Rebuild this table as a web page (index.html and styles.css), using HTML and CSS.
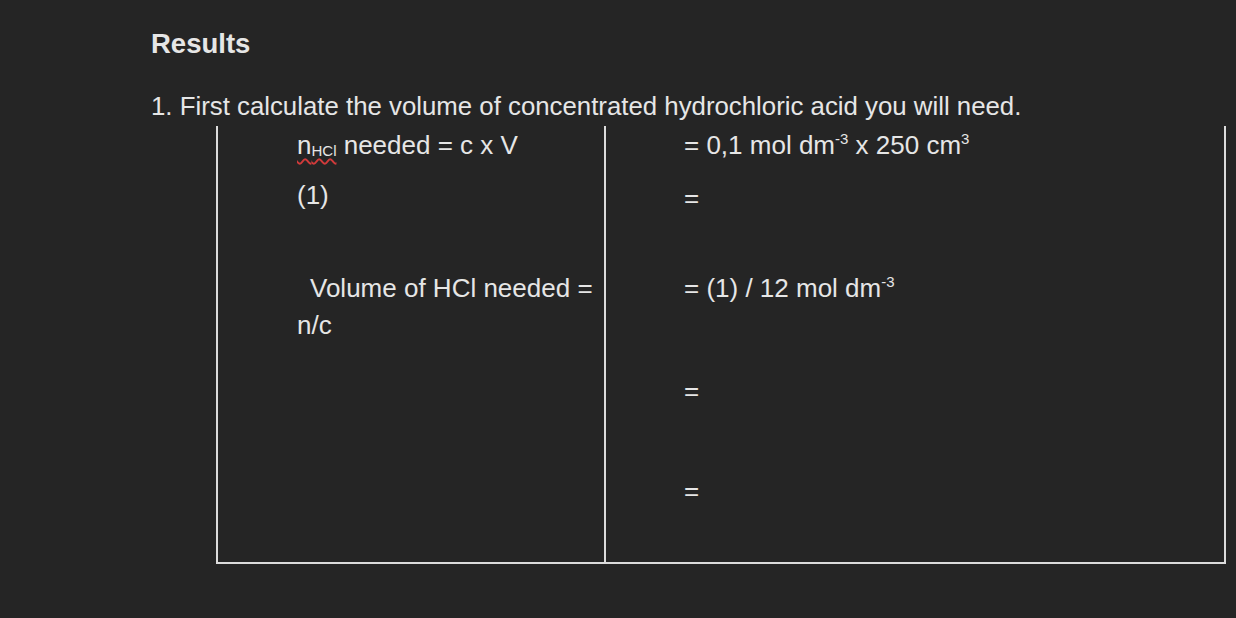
FILE: index.html
```html
<!DOCTYPE html>
<html>
<head>
<meta charset="utf-8">
<link rel="stylesheet" href="styles.css">
</head>
<body>
<main class="doc">
  <h2 class="title">Results</h2>
  <p class="question">1. First calculate the volume of concentrated hydrochloric acid you will need.</p>
  <div class="calc">
    <div class="cell cell-left">
      <p class="line"><span class="spell">n<sub>HCl</sub></span> needed = c x V</p>
      <p class="line gap-s">(1)</p>
      <p class="line gap-l wrap">Volume of HCl needed = n/c</p>
    </div>
    <div class="cell cell-right">
      <p class="line">= 0,1 mol dm<sup>-3</sup> x 250 cm<sup>3</sup></p>
      <p class="line gap-s eq">=</p>
      <p class="line gap-l">= (1) / 12 mol dm<sup>-3</sup></p>
      <p class="line gap-xl eq">=</p>
      <p class="line gap-xl2 eq">=</p>
    </div>
  </div>
</main>
</body>
</html>
```

FILE: styles.css
```css
html, body {
  margin: 0;
  padding: 0;
  background: #252525;
  width: 1236px;
  height: 618px;
  overflow: hidden;
}
.doc {
  padding: 27px 0 0 151px;
  font-family: "Liberation Sans", Arial, sans-serif;
  color: #e6e6e6;
}
.title {
  margin: 0;
  font-size: 27.5px;
  font-weight: bold;
  line-height: 34px;
}
.question {
  margin: 27px 0 0 0;
  font-size: 25.8px;
  line-height: 37px;
  white-space: nowrap;
}
.calc {
  margin-left: 65px;
  width: 1010px;
  height: 438px;
  margin-top: 1px;
  display: grid;
  grid-template-columns: 388px 1fr;
  border-left: 2px solid #dcdcdc;
  border-right: 2px solid #dcdcdc;
  border-bottom: 2px solid #dcdcdc;
  box-sizing: border-box;
}
.cell {
  display: flex;
  flex-direction: column;
}
.cell-left {
  padding: 1px 10px 0 79px;
  border-right: 2px solid #dcdcdc;
}
.cell-right {
  padding: 1px 10px 0 78px;
}
.line {
  margin: 0;
  font-size: 26px;
  line-height: 37px;
}
.eq { position: relative; top: 3px; }
.gap-s { margin-top: 13px; }
.gap-l { margin-top: 56px; }
.gap-xl { margin-top: 63px; }
.gap-xl2 { margin-top: 63px; }
.wrap {
  width: 299px;
  text-indent: 13px;
}
sub {
  font-size: 15px;
  vertical-align: -2px;
  line-height: 0;
}
sup {
  font-size: 15px;
  vertical-align: 10px;
  line-height: 0;
}
.spell {
  text-decoration: underline wavy #d23a3a;
  text-decoration-thickness: 1.5px;
  text-underline-offset: 4px;
}
```
